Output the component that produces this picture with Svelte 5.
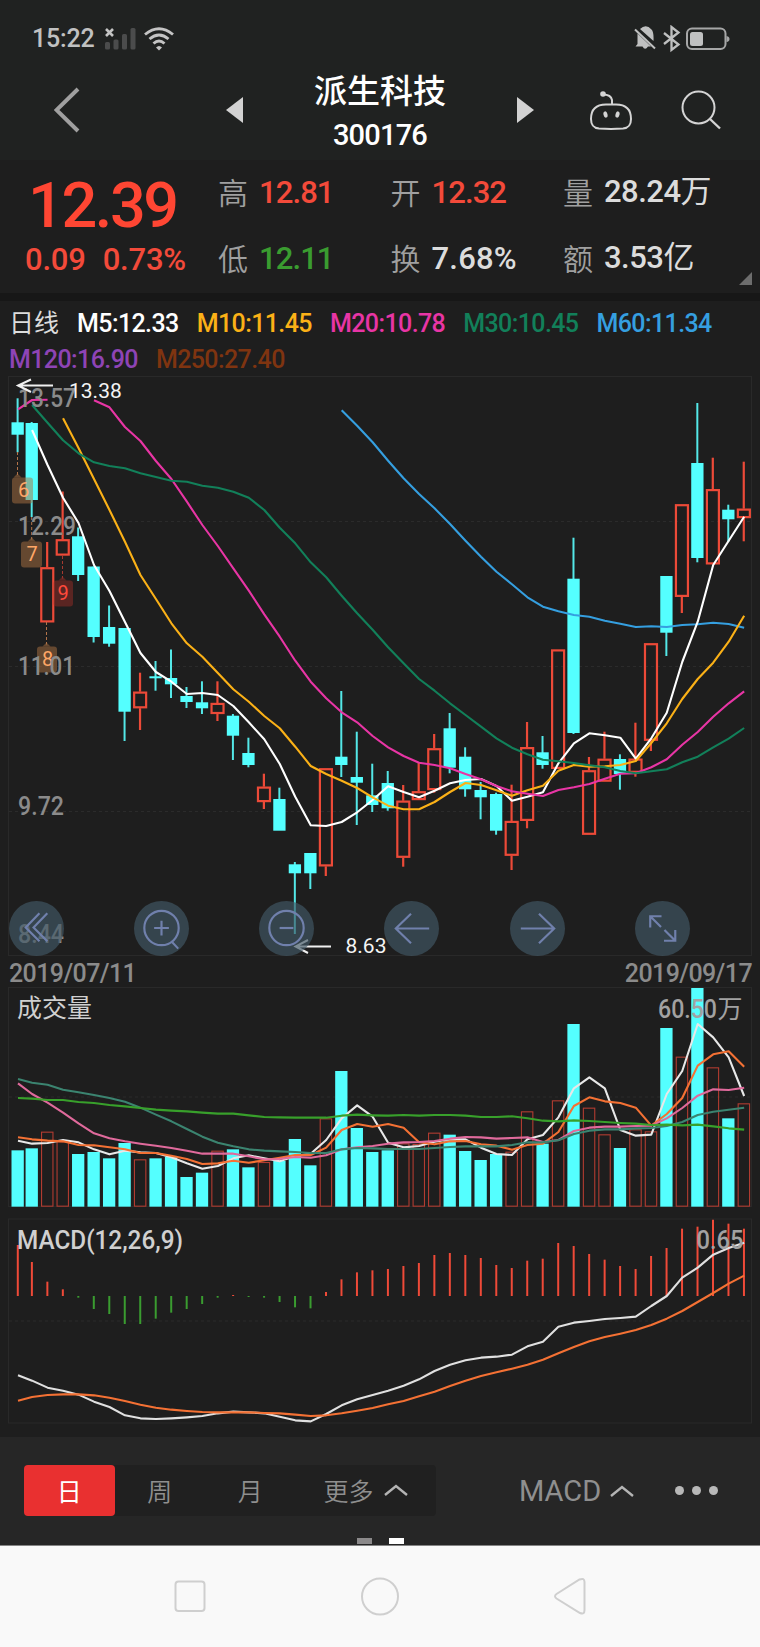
<script>
  const averages = [
    { label: 'M5:12.33', color: '#ffffff' },
    { label: 'M10:11.45', color: '#fbb117' },
    { label: 'M20:10.78', color: '#e835a5' },
    { label: 'M30:10.45', color: '#12805a' },
    { label: 'M60:11.34', color: '#359fe0' },
    { label: 'M120:16.90', color: '#8e44b5' },
    { label: 'M250:27.40', color: '#7f3410' },
  ]

  const quotes = [
    { name: '高', value: '12.81', tone: 'up' },
    { name: '开', value: '12.32', tone: 'up' },
    { name: '量', value: '28.24', unit: '万' },
    { name: '低', value: '12.11', tone: 'down' },
    { name: '换', value: '7.68%', tone: 'rate' },
    { name: '额', value: '3.53', unit: '亿' },
  ]

  // high, body top, body bottom, low, rising
  const candles = [
    [398.3, 422.3, 434.7, 452.3, 0], [422, 423, 500, 517, 0], [542, 567.3, 622.3, 622, 1],
    [491.5, 539.3, 555.5, 555, 1], [527.5, 536.3, 575, 581, 0], [566.5, 566.5, 637, 642.5, 0],
    [605.5, 627, 643.7, 646.7, 0], [628, 628, 711.7, 741, 0], [672.7, 691.7, 708.2, 730, 1],
    [661, 676.3, 678.3, 690.7, 0], [649.5, 678, 684.3, 698, 0], [687, 696, 702, 708, 0],
    [681.3, 702.3, 708.3, 714, 0], [681.3, 703, 713.9, 721, 1], [714, 715.7, 735.7, 760, 0],
    [737.7, 753, 765, 767.3, 0], [773.7, 786.7, 802, 809, 1], [787.7, 799, 830.7, 830, 0],
    [862, 864.3, 873.3, 934, 0], [853, 853, 873.3, 889, 0], [768.3, 768.3, 866.3, 876, 1],
    [691, 756.7, 765, 777, 0], [731.7, 777, 782.7, 825, 0], [763.7, 795.3, 805, 812, 0],
    [771, 783, 808.3, 810.7, 0], [785, 800.7, 857.7, 866.7, 1], [762.7, 791.3, 800, 799, 1],
    [734, 748.3, 790, 792.7, 1], [713, 728.3, 767.7, 773.3, 0], [747.3, 756.7, 789.3, 796.7, 0],
    [782, 790, 797.3, 819.3, 0], [792.7, 794, 830.7, 834.7, 0], [784.7, 821, 855.7, 870, 1],
    [722, 747.2, 820.8, 828.3, 1], [736, 752.3, 765, 768.7, 0], [649.5, 649.5, 768.8, 768, 1],
    [537.7, 578.7, 733, 734, 0], [757, 770.3, 834.7, 834, 1], [731.7, 758.8, 781.6, 781, 1],
    [754.3, 759, 774, 789.7, 0], [722.7, 758.7, 772.7, 776.7, 1], [643.3, 643.3, 740.7, 751, 1],
    [576, 576, 632.7, 656, 0], [504.3, 504.3, 596.8, 613, 1], [403, 463, 558, 562.3, 0],
    [457.7, 489.2, 564.3, 564, 1], [504.7, 509.7, 519.3, 542, 0], [461.7, 508.7, 518, 541.3, 1],
  ]

  const priceLines = [
    { color: '#359fe0', from: 21, ys: [410.3, 425.7, 442.3, 460.7, 478.3, 494, 508.3, 524, 540.7, 556.7, 571.7, 584.3, 597.3, 606.7, 611.3, 615, 616.7, 620.7, 623.7, 627, 626.3, 627, 625, 624.3, 622.7, 624, 627.7] },
    { color: '#ffffff', from: 1, ys: [430, 465, 497.7, 523, 565, 591, 622, 653, 672, 681.7, 694, 693, 695, 706, 722.3, 739.3, 764, 796.7, 825.3, 826, 822, 812.3, 800, 786.3, 792, 797.3, 790.7, 783.3, 780, 779, 786, 800.7, 796.7, 792.3, 763.3, 743.3, 733.3, 735.3, 737.7, 758.7, 738.3, 712.7, 662, 621.7, 565, 540.7, 516.7] },
    { color: '#fbb117', from: 3, ys: [418.3, 448, 479, 510, 541.7, 575, 599, 623.3, 643.3, 656.7, 673, 689.3, 701.7, 716, 728.3, 746.7, 766, 774, 780.7, 788, 797.3, 805.7, 809.3, 809.3, 802, 792, 783, 785, 790.3, 795.7, 790.3, 785.7, 770.7, 765, 766.7, 766.3, 765, 761, 743, 723.3, 699, 679, 662.7, 641.7, 615.7] },
    { color: '#e835a5', from: 0, ys: [409.3, 400, 399.7] },
    { color: '#e835a5', from: 5, ys: [400.3, 407.3, 427, 441, 461, 479, 501.7, 525, 546, 568.3, 590.7, 614.3, 636.7, 660.7, 681.7, 698.3, 712.3, 722.3, 736, 747.3, 756, 762.7, 765, 768.3, 774, 779.3, 786, 791.3, 793.7, 796, 790, 787.3, 784, 778.7, 773.7, 773.3, 767.3, 759.3, 744.7, 732, 716.7, 703.3, 691.3] },
    { color: '#12805a', from: 1, ys: [405, 422.7, 440.3, 453.3, 462.3, 466, 468.3, 473.3, 477, 480.7, 481.7, 485.7, 487.7, 491.7, 497.7, 510, 527.7, 543.3, 562.3, 577.3, 595.7, 613.3, 629.7, 647.3, 663.3, 679, 690.7, 703.3, 715, 726.7, 738.3, 747.7, 754.3, 759.7, 761.3, 763, 765.3, 767.3, 771, 773.3, 771.3, 769.3, 762.3, 756.7, 747.3, 738.7, 728] },
  ]

  // volume and macd values are stored in thirds of a pixel from the pane top
  const volumes = [511, 505, 455, 484, 522, 516, 535, 489, 538, 535, 530, 591, 578, 512, 508, 562, 546, 543, 477, 556, 415, 273, 444, 516, 511, 490, 492, 458, 464, 513, 540, 522, 515, 394, 491, 361, 132, 383, 463, 504, 448, 454, 144, 230, 24, 262, 415, 370]

  const volumeLines = [
    { color: '#e8e8e8', ys: [482, 491, 489, 480, 487, 508, 523, 512, 517, 519, 532, 550, 566, 558, 535, 526, 535, 544, 528, 521, 480, 415, 376, 410, 488, 502, 498, 485, 478, 478, 503, 522, 525, 478, 465, 412, 325, 292, 325, 450, 467, 464, 342, 273, 132, 172, 232, 348] },
    { color: '#f47134', ys: [472, 478, 482, 484, 495, 496, 502, 508, 519, 519, 527, 537, 552, 550, 542, 548, 541, 533, 525, 525, 503, 450, 432, 440, 432, 443, 487, 493, 484, 483, 493, 497, 509, 495, 491, 456, 378, 352, 364, 369, 383, 437, 402, 354, 257, 223, 214, 260] },
    { color: '#e06a9c', ys: [310, 342, 368, 398, 430, 460, 475, 484, 491, 497, 504, 512, 521, 521, 521, 529, 538, 537, 531, 533, 526, 508, 502, 498, 491, 487, 486, 483, 476, 471, 472, 476, 474, 472, 486, 480, 453, 443, 440, 440, 438, 437, 415, 384, 347, 328, 330, 323] },
    { color: '#3b8470', ys: [297, 308, 314, 329, 337, 345, 354, 365, 383, 404, 424, 447, 470, 488, 499, 508, 512, 514, 516, 519, 519, 508, 504, 505, 507, 507, 507, 504, 501, 499, 499, 499, 495, 487, 487, 481, 462, 452, 448, 448, 445, 444, 438, 426, 405, 395, 389, 383] },
    { color: '#38a02b', ys: [354, 356, 360, 360, 366, 369, 375, 379, 384, 389, 392, 394, 398, 401, 401, 406, 411, 412, 413, 413, 413, 407, 404, 406, 407, 405, 407, 405, 405, 407, 411, 411, 409, 415, 422, 424, 421, 423, 426, 429, 431, 435, 434, 436, 434, 439, 445, 449] },
  ]

  const macdBars = [105, 156, 215, 238, 263, 297, 312, 342, 342, 326, 308, 297, 282, 263, 255, 261, 263, 276, 292, 295, 246, 208, 187, 181, 177, 168, 159, 135, 129, 135, 144, 165, 174, 152, 146, 99, 108, 132, 149, 168, 177, 138, 114, 56, 50, 29, 41, 56]
  const macdZero = 258

  const macdLines = [
    { color: '#e0e0e0', ys: [496, 512, 533, 542, 554, 575, 591, 616, 625, 627, 625, 622, 618, 610, 605, 607, 610, 620, 631, 634, 612, 586, 568, 555, 542, 527, 508, 483, 464, 451, 443, 440, 434, 409, 395, 350, 338, 333, 327, 324, 320, 288, 258, 203, 173, 134, 114, 98] },
    { color: '#f47134', ys: [572, 561, 555, 553, 553, 556, 563, 573, 584, 593, 599, 603, 606, 607, 607, 607, 609, 610, 614, 618, 616, 610, 602, 594, 583, 573, 559, 545, 528, 512, 498, 487, 476, 464, 449, 430, 411, 394, 381, 371, 360, 345, 326, 303, 276, 249, 221, 197] },
  ]

  const priceLabels = [
    { text: '13.57', y: 406.7, w: 58 },
    { text: '12.29', y: 534.5, w: 58 },
    { text: '11.01', y: 674.5, w: 57 },
    { text: '9.72', y: 815, w: 46 },
    { text: '8.44', y: 942.7, w: 46 },
  ]

  const badges = [
    { n: 6, x: 12, w: 21, y: 477.5, line: 17.5, from: 452, tx: 23.5 },
    { n: 7, x: 21, w: 21, y: 541.5, line: 31.7, from: 517, tx: 32 },
    { n: 8, x: 37, w: 20, y: 646.5, line: 46.5, from: 622, tx: 47.5 },
    { n: 9, x: 53.5, w: 19.5, y: 580.5, line: 62.5, from: 556, tx: 63, hot: true },
  ]

  const cx = (i) => (i === 0 ? 17.6 : 16.2 + i * 15.48)
  const points = (ys, from = 0) => ys.map((y, i) => `${cx(i + from) + 0.4},${y}`).join(' ')
  const third = (ys) => ys.map((y) => y / 3)

  let period = $state('日')
</script>

<div class="phone">
  <div class="status">
    <span class="clock">15:22</span>
    <svg class="signal" width="32" height="24" viewBox="0 0 32 24">
      <path d="M2 2l7 7M9 2l-7 7" stroke="#c4c4c4" stroke-width="2.6" />
      <g fill="#4b4c4c">
        <rect x="1" y="15" width="5" height="7.5" rx="1.5" />
        <rect x="9.5" y="12.5" width="5" height="10" rx="1.5" />
        <rect x="18" y="7" width="5" height="15.5" rx="1.5" />
        <rect x="26.5" y="1" width="5" height="21.5" rx="1.5" />
      </g>
    </svg>
    <svg class="wifi" width="30" height="24" viewBox="0 0 30 24" fill="none" stroke="#c4c4c4" stroke-width="2.9">
      <path d="M1 7.5Q15-4 29 7.5" />
      <path d="M5.5 12Q15 4 24.5 12" />
      <path d="M9.500 16.5Q15 11.5 20.5 16.5" />
      <path d="M12 20.500Q15 17.5 18 20.5L15 23.5z" fill="#c4c4c4" stroke="none" />
    </svg>
    <div class="status-right">
      <svg width="96" height="28" viewBox="0 0 96 28">
        <path d="M3.500 8.5V19l-2 2.5H8.5Q11 26 14 21.5h3zM6 4Q12-1.5 17.5 4.5Q20 7 19.5 16z" fill="#bfc0c0" />
        <path d="M1 4.5l20 19" stroke="#bfc0c0" stroke-width="2" />
        <path d="M30 8l14.5 11.5-7 5.5V2l7 5.5L30 19" fill="none" stroke="#bfc0c0" stroke-width="2.3" />
        <rect x="53" y="3.5" width="38.5" height="20.5" rx="5" fill="none" stroke="#a6a7a7" stroke-width="2" />
        <rect x="56" y="7" width="13" height="14" rx="2.5" fill="#c0c1c1" />
        <path d="M92.500 11q3 .5 3 3t-3 3z" fill="#a6a7a7" />
      </svg>
    </div>
  </div>

  <header>
    <button class="back" aria-label="返回">
      <svg width="26" height="46" viewBox="0 0 26 46"><path d="M24 2L2.500 23 24 44" fill="none" stroke="#a0a0a0" stroke-width="4" /></svg>
    </button>
    <button class="prev" aria-label="上一只">
      <svg width="17" height="26" viewBox="0 0 17 26"><path d="M17 0v26L0 13z" fill="#d2d2d2" /></svg>
    </button>
    <div class="title">
      <h1>派生科技</h1>
      <span>300176</span>
    </div>
    <button class="next" aria-label="下一只">
      <svg width="17" height="26" viewBox="0 0 17 26"><path d="M0 0v26l17-13z" fill="#d2d2d2" /></svg>
    </button>
    <button class="robot" aria-label="助手">
      <svg width="44" height="40" viewBox="0 0 44 40" fill="none" stroke="#d4d4d4" stroke-width="2">
        <path d="M17 14.5h10c9 0 15 4.5 15 14.5 0 7-3 9-8 9.5-8 .6-16 .6-24 0-5-.5-8-2.5-8-9.5 0-10 6-14.5 15-14.5z" />
        <path d="M23 14V10Q22 4.5 14 4.5" />
        <circle cx="14" cy="4" r="2.8" fill="#d4d4d4" stroke="none" />
        <ellipse cx="16.5" cy="24.5" rx="2" ry="3.2" fill="#d4d4d4" stroke="none" transform="rotate(-14 16.5 24.5)" />
        <ellipse cx="28.5" cy="24.5" rx="2" ry="3.2" fill="#d4d4d4" stroke="none" transform="rotate(14 28.5 24.5)" />
      </svg>
    </button>
    <button class="search" aria-label="搜索">
      <svg width="40" height="40" viewBox="0 0 40 40" fill="none" stroke="#d4d4d4" stroke-width="2">
        <circle cx="17.5" cy="17.5" r="16" />
        <path d="M29 29l10 9.5" stroke-width="2.4" />
      </svg>
    </button>
  </header>

  <section class="quote">
    <div class="last">
      <strong>12.39</strong>
      <div class="change"><span>0.09</span><span>0.73%</span></div>
    </div>
    <div class="stats">
      {#each quotes as q}
        <div class="stat">
          <span class="name">{q.name}</span>
          <span class="value {q.tone ?? ''}">{q.value}{#if q.unit}<i>{q.unit}</i>{/if}</span>
        </div>
      {/each}
    </div>
    <svg class="corner" width="13" height="13" viewBox="0 0 13 13"><path d="M13 0v13H0z" fill="#6d6d6d" /></svg>
  </section>

  <div class="legend">
    <b>日线</b>
    {#each averages as a}
      <span style:color={a.color}>{a.label}</span>
    {/each}
  </div>

  <div class="price">
    <svg width="760" height="584" viewBox="0 374 760 584">
      <rect class="frame" x="8.5" y="376.5" width="743" height="579" />
      {#each [521.5, 666.5, 811.5] as y}
        <line class="grid" x1="9" x2="751" y1={y} y2={y} />
      {/each}

      {#each candles as [high, top, bottom, low, rising], i}
        {#if rising}
          <g class="rise">
            {#if high < top}<line x1={cx(i)} x2={cx(i)} y1={high} y2={top} />{/if}
            {#if low > bottom}<line x1={cx(i)} x2={cx(i)} y1={bottom} y2={low} />{/if}
            <rect x={cx(i) - 5.9} y={top + 0.9} width="12" height={bottom - top - 1.8} />
          </g>
        {:else}
          <g class="fall">
            <line x1={cx(i)} x2={cx(i)} y1={high} y2={low} />
            <rect x={cx(i) - 6.1} y={top} width="12.3" height={bottom - top} />
          </g>
        {/if}
      {/each}

      {#each priceLines as line}
        <polyline class="curve" points={points(line.ys, line.from)} stroke={line.color} />
      {/each}

      {#each badges as b}
        <g class="badge" class:hot={b.hot}>
          <line x1={b.line} x2={b.line} y1={b.from} y2={b.y - 2} />
          <path d="M{b.line - 4} {b.y}l4-4 4 4z" />
          <rect x={b.x} y={b.y} width={b.w} height="26" rx="3" />
          <text x={b.tx} y={b.y + 19}>{b.n}</text>
        </g>
      {/each}

      {#each priceLabels as l}
        <text class="axis" x="18" y={l.y} textLength={l.w} lengthAdjust="spacingAndGlyphs">{l.text}</text>
      {/each}

      <path class="arrow" d="M53 385.5H18M31 379.5L18 385.5l13 6.5" />
      <text class="extreme" x="69" y="398">13.38</text>
      <path class="arrow" d="M331 946.5H296M308 940L295.5 946.5l12.5 6.500" />
      <text class="extreme" x="345.5" y="953">8.63</text>
    </svg>

    <div class="tools">
      <button aria-label="最早"><svg viewBox="0 0 56 56"><path d="M31 12.5L17 27l14 14M39 12.5L25 27l14 14" /></svg></button>
      <button aria-label="放大"><svg viewBox="0 0 56 56"><circle cx="28" cy="27.5" r="17.5" /><path d="M28 20v15M20.5 27.5h15M38 41l7 7.5" /></svg></button>
      <button aria-label="缩小"><svg viewBox="0 0 56 56"><circle cx="28" cy="27.5" r="17.5" /><path d="M21 27.5h14" /></svg></button>
      <button aria-label="左移"><svg viewBox="0 0 56 56"><path d="M46 28H12M27.5 13L12 28l15.5 15" /></svg></button>
      <button aria-label="右移"><svg viewBox="0 0 56 56"><path d="M11 28h34M29.5 13L45 28 29.5 43" /></svg></button>
      <button aria-label="全屏"><svg viewBox="0 0 56 56"><path d="M27 15.5H15.5V27M15.5 15.5L26.5 26.5M29.5 40.5H41V29.5M41 40.5L30 29.5" /></svg></button>
    </div>
  </div>

  <div class="dates"><span>2019/07/11</span><span>2019/09/17</span></div>

  <svg class="pane" width="760" height="224" viewBox="0 6 760 224">
    <rect class="frame" x="8.5" y="7.5" width="743" height="219" />
    <line class="grid" x1="9" x2="751" y1="117" y2="117" />
    {#each volumes as v, i}
      {#if candles[i][4]}
        <rect class="vol-rise" x={cx(i) - 5.6} y={v / 3 + 0.5} width="11.4" height={(680 - v) / 3 - 1} />
      {:else}
        <rect class="vol-fall" x={cx(i) - 6.1} y={v / 3} width="12.3" height={(680 - v) / 3} />
      {/if}
    {/each}
    {#each volumeLines as line}
      <polyline class="curve" points={points(third(line.ys))} stroke={line.color} />
    {/each}
    <text class="pane-title cjk" x="17" y="37">成交量</text>
    <text class="pane-max" x="658" y="37.5" textLength="59" lengthAdjust="spacingAndGlyphs">60.50</text>
    <text class="pane-max cjk" x="717.5" y="37.5">万</text>
  </svg>

  <svg class="pane" width="760" height="227" viewBox="0 0 760 227">
    <rect class="frame" x="8.5" y="9" width="743" height="204" />
    <line class="grid" x1="9" x2="751" y1="111" y2="111" />
    {#each macdBars as v, i}
      <line
        x1={cx(i) + 0.2}
        x2={cx(i) + 0.2}
        y1={v / 3}
        y2={macdZero / 3}
        stroke={v < macdZero ? '#ef4a38' : '#3a9c30'}
        stroke-width="2"
      />
    {/each}
    {#each macdLines as line}
      <polyline class="curve" points={points(third(line.ys))} stroke={line.color} />
    {/each}
    <text class="pane-title" x="17" y="39" textLength="166" lengthAdjust="spacingAndGlyphs">MACD(12,26,9)</text>
    <text class="pane-max" x="696.5" y="39" textLength="47" lengthAdjust="spacingAndGlyphs">0.65</text>
  </svg>

  <div class="toolbar">
    <div class="periods">
      {#each ['日', '周', '月'] as p}
        <button class:active={period === p} onclick={() => (period = p)}>{p}</button>
      {/each}
      <button class="more">更多 <svg width="24" height="12" viewBox="0 0 24 12"><path d="M1 11L12 2l11 9" /></svg></button>
    </div>
    <button class="indicator">MACD <svg width="24" height="12" viewBox="0 0 24 12"><path d="M1 11L12 2l11 9" /></svg></button>
    <button class="dots" aria-label="更多"><i></i><i></i><i></i></button>
    <div class="pager"><i></i><i class="on"></i></div>
  </div>

  <nav>
    <svg width="760" height="101" viewBox="0 0 760 101" fill="none" stroke="#cfcfcf" stroke-width="2">
      <rect x="175.5" y="35.5" width="29" height="29.5" rx="3" />
      <circle cx="380" cy="50.5" r="18" />
      <path d="M556.5 48L579.5 33.5Q584.5 31.5 584.5 36V64Q584.5 69 580 67L556.5 52.5Q553.5 50.2 556.5 48z" />
    </svg>
  </nav>
</div>

<style>
  :global(body) {
    background: #1e1e1e;
  }

  .phone {
    width: 760px;
    height: 1647px;
    overflow: hidden;
    background: #1e1e1e;
    color: #dcdcdc;
    font-family: Roboto, "Noto Sans CJK SC", sans-serif;
  }

  svg {
    display: block;
  }

  button {
    padding: 0;
    border: 0;
    background: none;
    color: inherit;
    font: inherit;
  }

  .status {
    display: flex;
    align-items: center;
    box-sizing: border-box;
    height: 77px;
    padding: 0 30px 0 32px;
    background: #202221;
  }

  .clock {
    width: 72px;
    font-size: 25px;
    font-weight: 500;
    letter-spacing: -0.2px;
    color: #c0c1c1;
  }

  .wifi {
    margin-left: 8px;
  }

  .status-right {
    margin-left: auto;
  }

  header {
    display: grid;
    grid-template-columns: 226px 17px 274px 17px 55px 44px 48px 42px;
    height: 83px;
    background: #202221;
  }

  header button {
    height: 66px;
    display: flex;
    align-items: center;
  }

  .back {
    padding-left: 54px;
  }

  .robot {
    grid-column: 6;
  }

  .search {
    grid-column: 8;
  }

  .title {
    display: flex;
    flex-direction: column;
    align-items: center;
    color: #fff;
  }

  .title h1 {
    margin: -8px 0 0;
    font-size: 33px;
    font-weight: 500;
    line-height: 46px;
  }

  .title span {
    margin-top: 2px;
    font-size: 29px;
    font-weight: 500;
    line-height: 36px;
    letter-spacing: -0.8px;
  }

  .quote {
    position: relative;
    display: flex;
    height: 133px;
    border-bottom: 8px solid #171717;
  }

  .last {
    width: 218px;
    color: #ff4633;
  }

  .last strong {
    display: block;
    padding: 9px 0 0 28px;
    font-size: 63px;
    font-weight: 500;
    line-height: 73px;
    letter-spacing: -2.4px;
  }

  .change {
    display: flex;
    gap: 17px;
    padding-left: 25px;
    font-size: 31px;
    font-weight: 500;
    line-height: 36px;
    letter-spacing: -0.2px;
    color: #f34a3a;
  }

  .stats {
    display: grid;
    grid-template-columns: repeat(3, 172.5px);
    grid-template-rows: 66px 66px;
  }

  .stat {
    display: flex;
    align-items: center;
    height: 66px;
  }

  .name {
    width: 41px;
    margin-top: -4px;
    font-size: 30px;
    font-weight: 350;
    color: #a0a0a0;
  }

  .value {
    font-size: 31px;
    font-weight: 500;
    line-height: 40px;
    letter-spacing: -0.9px;
    white-space: nowrap;
  }

  .value:has(i) {
    margin-top: -2px;
    letter-spacing: -0.5px;
  }

  .value i {
    font-style: normal;
    font-weight: 400;
  }

  .rate {
    letter-spacing: 0.2px;
  }

  .up {
    color: #f34a3a;
  }

  .down {
    color: #3a9c30;
  }

  .corner {
    position: absolute;
    right: 8px;
    bottom: 8px;
  }

  .legend {
    display: flex;
    flex-wrap: wrap;
    column-gap: 18px;
    box-sizing: border-box;
    height: 73px;
    padding: 5px 9px 0;
    font-size: 25px;
    font-weight: 500;
    line-height: 36px;
    letter-spacing: -0.6px;
  }

  .legend b {
    font-weight: 400;
    letter-spacing: 0;
  }

  .price {
    position: relative;
  }

  .frame {
    fill: none;
    stroke: #292929;
  }

  .grid {
    stroke: #2b2b2b;
    stroke-dasharray: 3 3;
  }

  .rise line,
  .rise rect {
    fill: none;
    stroke: #ec4a38;
    stroke-width: 2.2;
  }

  .fall line {
    stroke: #54e8e8;
    stroke-width: 2;
  }

  .fall rect,
  .vol-fall {
    fill: #54ffff;
  }

  .vol-rise {
    fill: none;
    stroke: #b23c31;
    stroke-width: 1.1;
  }

  .curve {
    fill: none;
    stroke-width: 2.1;
    stroke-linejoin: round;
  }

  .badge line {
    stroke: #b4744a;
    stroke-dasharray: 3 2;
  }

  .badge rect,
  .badge path {
    fill: #ab7242;
    fill-opacity: 0.5;
  }

  .badge text {
    fill: #ffa767;
    font-size: 20px;
    text-anchor: middle;
  }

  .badge.hot line {
    stroke: #a63a30;
  }

  .badge.hot rect,
  .badge.hot path {
    fill: #962c25;
  }

  .badge.hot text {
    fill: #ff4a3c;
  }

  .axis {
    fill: #8b8b8b;
    font-size: 25px;
    font-weight: 500;
  }

  .arrow {
    fill: none;
    stroke: #f0f0f0;
    stroke-width: 2;
  }

  .extreme {
    fill: #f4f4f4;
    font-size: 21px;
  }

  .tools {
    position: absolute;
    left: 8.5px;
    top: 527px;
    display: flex;
    gap: 70.3px;
  }

  .tools button {
    width: 55px;
    height: 55px;
    border-radius: 50%;
    background: rgba(66, 88, 102, 0.66);
  }

  .tools svg {
    fill: none;
    stroke: #7080ac;
    stroke-width: 2.2;
  }

  .dates {
    display: flex;
    justify-content: space-between;
    height: 28px;
    padding: 0 8px 0 9px;
    font-size: 25px;
    font-weight: 500;
    line-height: 32px;
    letter-spacing: -0.6px;
    color: #8b8b8b;
  }

  .pane-title {
    fill: #d0d0d0;
    font-size: 25px;
    font-weight: 500;
  }

  .pane-max {
    fill: #a2a2a2;
    font-size: 25px;
    font-weight: 500;
  }

  .cjk {
    font-weight: 400;
  }

  .toolbar {
    position: relative;
    display: flex;
    align-items: flex-start;
    box-sizing: border-box;
    height: 109px;
    padding: 28px 24px 0;
    background: #262626;
    border-bottom: 1px solid #858585;
    color: #8f8f8f;
    font-size: 25px;
    font-weight: 350;
  }

  .toolbar button {
    height: 51px;
    padding-bottom: 2px;
  }

  .toolbar svg {
    fill: none;
    stroke: #b4b4b4;
    stroke-width: 2.4;
  }

  .periods {
    display: flex;
    width: 412px;
    border-radius: 4px;
    background: #202020;
  }

  .periods button {
    width: 90.5px;
  }

  .periods .active {
    border-radius: 4px;
    background: #e93030;
    color: #fff;
    font-weight: 400;
  }

  .periods .more,
  .indicator {
    display: flex;
    align-items: center;
    gap: 10px;
  }

  .periods .more {
    width: auto;
    padding-left: 28px;
  }

  .toolbar .indicator {
    margin-left: 83px;
    padding-bottom: 0;
    gap: 9px;
    font-size: 29px;
    font-weight: 400;
  }

  .toolbar .dots {
    display: flex;
    align-items: center;
    gap: 8px;
    margin-left: 41px;
    padding-bottom: 0;
  }

  .dots i {
    width: 9px;
    height: 9px;
    border-radius: 50%;
    background: #b8b8b8;
  }

  .pager {
    position: absolute;
    left: 357px;
    bottom: 1px;
    display: flex;
    gap: 16.5px;
  }

  .pager i {
    width: 15px;
    height: 6px;
    background: #8b898a;
  }

  .pager .on {
    background: #fff;
  }

  nav {
    height: 101px;
    background: #f9f9f9;
  }
</style>
